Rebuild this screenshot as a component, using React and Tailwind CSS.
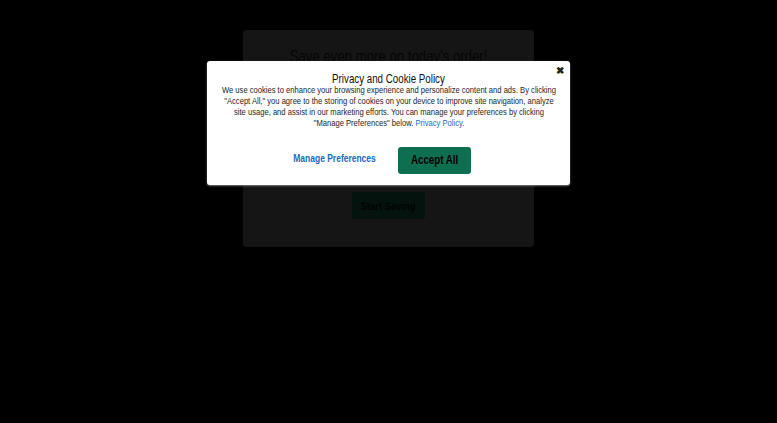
export default function App() {
  return (
    <div className="relative w-[777px] h-[423px] bg-black overflow-hidden" style={{ fontFamily: '"Liberation Sans", Arial, sans-serif' }}>
      <div className="pt-[30px] flex justify-center">
        <div className="w-[291px] h-[217px] bg-[#151515] rounded-[4px] flex flex-col items-center pt-[16px]">
          <h2 className="shrink-0 whitespace-nowrap text-[16.5px] leading-[20px] text-[#060606] scale-x-[0.8]">Save even more on today's order!</h2>
          <div className="flex-1" />
          <div className="mb-[28px] w-[73px] h-[27px] rounded-[3px] bg-[#04130d] flex items-center justify-center">
            <span className="shrink-0 whitespace-nowrap text-[11.7px] font-bold text-[#030303] scale-x-[0.8]">Start Saving</span>
          </div>
        </div>
      </div>
      <div className="absolute left-[207px] top-[61px] w-[363px] h-[124px] bg-white rounded-[3px] shadow-[0_1px_2px_rgba(150,150,150,0.8)] flex flex-col items-center">
        <button className="absolute right-[6px] top-[5px] text-[10px] font-bold text-[#222] leading-none">✖</button>
        <h3 className="mt-[11px] shrink-0 whitespace-nowrap text-[12.2px] leading-[14px] text-[#111] scale-x-[0.8]">Privacy and Cookie Policy</h3>
        <p className="mt-[-2px] w-[422px] shrink-0 text-center text-[9.5px] leading-[11px] text-[#1e1e1e] scale-x-[0.8]">
          We use cookies to enhance your browsing experience and personalize content and ads. By clicking "Accept All," you agree to the storing of cookies on your device to improve site navigation, analyze site usage, and assist in our marketing efforts. You can manage your preferences by clicking "Manage Preferences" below. <span className="text-[#1a6cc0]">Privacy Policy.</span>
        </p>
        <div className="mt-[19px] mr-[12px] flex items-center gap-[23px]">
          <div className="w-[81px] flex justify-center mt-[-3px]">
            <span className="shrink-0 whitespace-nowrap text-[10.6px] font-bold text-[#1a6cc0] scale-x-[0.8]">Manage Preferences</span>
          </div>
          <div className="w-[73px] h-[27px] rounded-[3px] bg-[#0d6f50] flex items-center justify-center">
            <span className="shrink-0 whitespace-nowrap text-[12.2px] font-bold text-black scale-x-[0.8]">Accept All</span>
          </div>
        </div>
      </div>
    </div>
  );
}
